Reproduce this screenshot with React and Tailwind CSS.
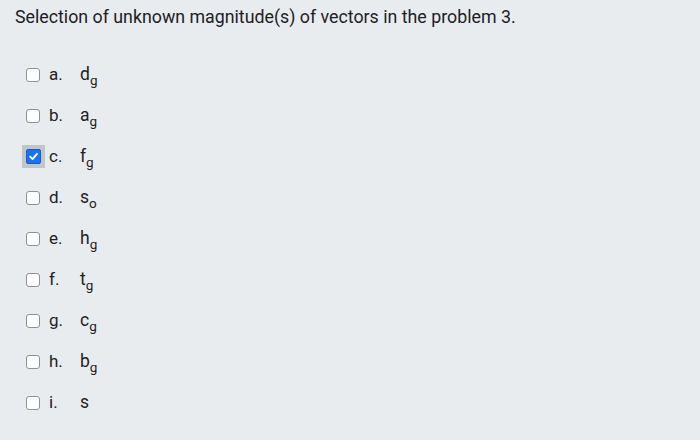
import React from "react";

const items = [
  ["a.", "d", "g", false],
  ["b.", "a", "g", false],
  ["c.", "f", "g", true],
  ["d.", "s", "o", false],
  ["e.", "h", "g", false],
  ["f.", "t", "g", false],
  ["g.", "c", "g", false],
  ["h.", "b", "g", false],
  ["i.", "s", "", false],
];

function Box({ checked }) {
  if (checked) {
    return (
      <div className="w-[23px] h-[23px] bg-[#c3c6c9] flex items-center justify-center -ml-[4px] -mr-[4px] shrink-0">
        <div className="w-[15px] h-[15px] rounded-[2px] bg-[#1a73e8] border border-[#0f5fd0] flex items-center justify-center">
          <svg width="11" height="11" viewBox="0 0 12 12">
            <path d="M2.3 6.2 L5 8.8 L9.8 3.2" fill="none" stroke="white" strokeWidth="2" strokeLinecap="round" strokeLinejoin="round" />
          </svg>
        </div>
      </div>
    );
  }
  return <div className="w-[14px] h-[14px] rounded-[3px] border-[1.5px] border-[#8d9196] bg-white shrink-0" />;
}

export default function App() {
  return (
    <div className="w-[700px] h-[440px] bg-[#e9ecef] text-[#1d2125] overflow-hidden" style={{ fontFamily: 'Roboto, "Noto Sans", sans-serif' }}>
      <div className="pt-[5px] pl-[15px] text-[17.8px] leading-[24px]">
        Selection of unknown magnitude(s) of vectors in the problem 3.
      </div>
      <div className="mt-[25px] flex flex-col">
        {items.map(([l, v, s, c]) => (
          <div key={l} className="h-[41px] flex items-center pl-[26px]">
            <div className="w-[14px] flex items-center justify-center">
              <Box checked={c} />
            </div>
            <span className="ml-[9px] w-[31px] text-[17px]">{l}</span>
            <span className="text-[17.5px]">
              {v}
              {s && <span className="text-[13.5px] relative top-[5px]">{s}</span>}
            </span>
          </div>
        ))}
      </div>
    </div>
  );
}
